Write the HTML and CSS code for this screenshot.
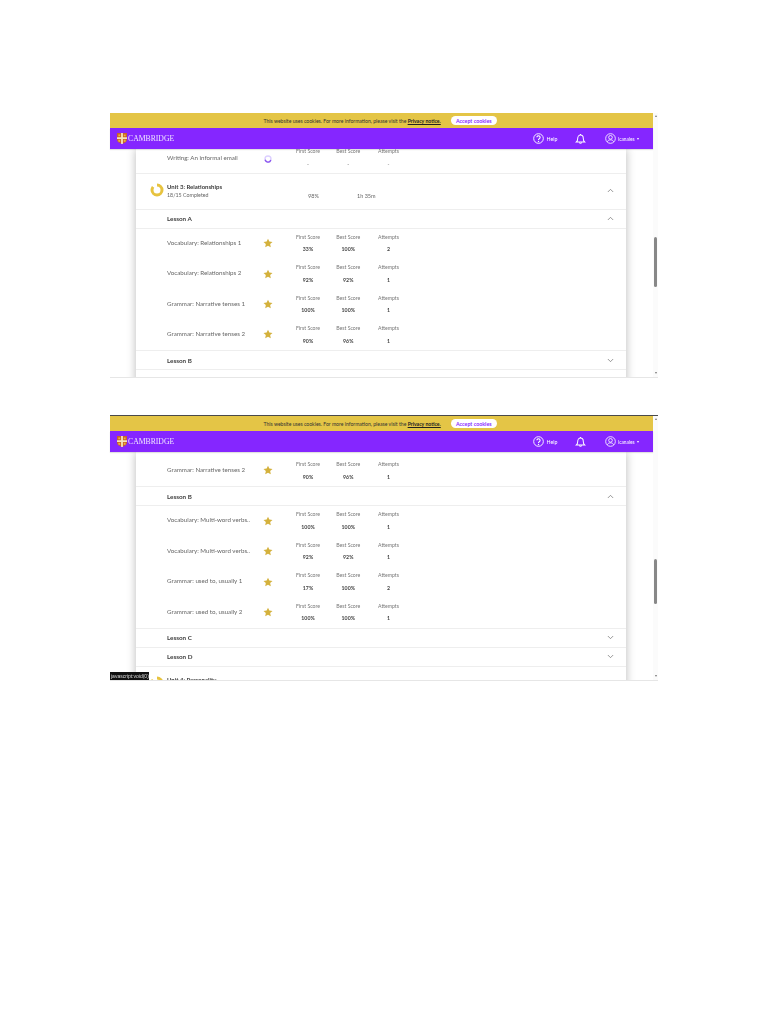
FILE: index.html
```html
<!DOCTYPE html>
<html lang="en">
<head>
<meta charset="utf-8">
<title>Cambridge course progress</title>
<link rel="stylesheet" href="styles.css">
</head>
<body>
<svg class="defs" width="0" height="0" aria-hidden="true">
  <defs>
    <symbol id="star" viewBox="0 0 24 24"><path d="M12 1.5l3.2 6.9 7.6.9-5.6 5.2 1.5 7.5L12 18.3l-6.7 3.7 1.5-7.5L1.2 9.3l7.6-.9z"/></symbol>
    <symbol id="up" viewBox="0 0 12 8"><path d="M1.5 6.5L6 2l4.500 4.500"/></symbol>
    <symbol id="down" viewBox="0 0 12 8"><path d="M1.500 1.500L6 6l4.500-4.500"/></symbol>
    <symbol id="shield" viewBox="0 0 11 12"><path fill="#c9622a" d="M0 0h11v7.500c0 2.500-3 3.800-5.500 4.500C3 11.300 0 10 0 7.500z"/><path fill="#f3e4bd" d="M4.500 0h2v12h-2zM0 4.500h11v2H0z"/><path fill="#e8b93e" d="M1.500 1.500h2v2h-2zM7.500 1.500h2v2h-2zM1.500 7.500h2v2h-2zM7.500 7.500h2v2h-2z"/></symbol>
    <symbol id="help" viewBox="0 0 24 24"><circle cx="12" cy="12" r="10.500" fill="none" stroke="#fff" stroke-width="2"/><path fill="none" stroke="#fff" stroke-width="2.400" d="M8.500 9.500a3.500 3.500 0 1 1 5.500 2.800c-1.300 1-2 1.500-2 3"/><circle cx="12" cy="18.500" r="1.500" fill="#fff"/></symbol>
    <symbol id="bell" viewBox="0 0 24 24"><path fill="none" stroke="#fff" stroke-width="2.200" d="M3 19.500c2.500-2 3-4 3-8 0-4 2.500-7 6-7s6 3 6 7c0 4 .5 6 3 8z"/><path fill="none" stroke="#fff" stroke-width="2.200" d="M9.500 20.500a2.600 2.600 0 0 0 5 0M12 4.500V2"/></symbol>
    <symbol id="user" viewBox="0 0 24 24"><circle cx="12" cy="12" r="10.500" fill="none" stroke="#fff" stroke-width="1.800"/><circle cx="12" cy="9.500" r="4" fill="none" stroke="#fff" stroke-width="1.800"/><path fill="none" stroke="#fff" stroke-width="1.800" d="M5 19c1.500-3 4-4 7-4s5.500 1 7 4"/></symbol>
  </defs>
</svg>

<section class="frame">
  <div class="app">
    <div class="cookie"><span>This website uses cookies. For more information, please visit the <a class="privacy" href="#">Privacy notice.</a></span><button class="accept">Accept cookies</button></div>
    <nav class="nav">
      <a class="brand" href="#"><svg class="shield"><use href="#shield"/></svg>CAMBRIDGE</a>
      <a class="nav-help" href="#"><svg class="nav-icon"><use href="#help"/></svg>Help</a>
      <svg class="nav-icon bell"><use href="#bell"/></svg>
      <a class="nav-user" href="#"><svg class="nav-icon"><use href="#user"/></svg>lcanales<span class="caret"></span></a>
    </nav>
    <div class="viewport">
      <div class="card">
        <div class="row row-cut">
          <span class="title">Writing: An informal email</span>
          <svg class="spinner" viewBox="0 0 12 12"><circle class="spin-bg" cx="6" cy="6" r="4.500" pathLength="100"/><circle class="spin-fg" cx="6" cy="6" r="4.500" pathLength="100"/></svg>
          <div class="score"><span>First Score</span><b class="dash">-</b></div>
          <div class="score"><span>Best Score</span><b class="dash">-</b></div>
          <div class="score"><span>Attempts</span><b class="dash">-</b></div>
        </div>
        <div class="unit">
          <svg class="ring" viewBox="0 0 14 14"><circle cx="7" cy="7" r="5" pathLength="100"/></svg>
          <div class="unit-text"><strong>Unit 3: Relationships</strong><small>18/15 Completed</small></div>
          <span class="unit-pct">98%</span>
          <span class="unit-time">1h 35m</span>
          <svg class="chev"><use href="#up"/></svg>
        </div>
        <div class="lesson"><strong>Lesson A</strong><svg class="chev"><use href="#up"/></svg></div>
        <div class="row">
          <span class="title">Vocabulary: Relationships 1</span><svg class="star"><use href="#star"/></svg>
          <div class="score"><span>First Score</span><b>33%</b></div>
          <div class="score"><span>Best Score</span><b>100%</b></div>
          <div class="score"><span>Attempts</span><b>2</b></div>
        </div>
        <div class="row">
          <span class="title">Vocabulary: Relationships 2</span><svg class="star"><use href="#star"/></svg>
          <div class="score"><span>First Score</span><b>92%</b></div>
          <div class="score"><span>Best Score</span><b>92%</b></div>
          <div class="score"><span>Attempts</span><b>1</b></div>
        </div>
        <div class="row">
          <span class="title">Grammar: Narrative tenses 1</span><svg class="star"><use href="#star"/></svg>
          <div class="score"><span>First Score</span><b>100%</b></div>
          <div class="score"><span>Best Score</span><b>100%</b></div>
          <div class="score"><span>Attempts</span><b>1</b></div>
        </div>
        <div class="row row-last">
          <span class="title">Grammar: Narrative tenses 2</span><svg class="star"><use href="#star"/></svg>
          <div class="score"><span>First Score</span><b>90%</b></div>
          <div class="score"><span>Best Score</span><b>96%</b></div>
          <div class="score"><span>Attempts</span><b>1</b></div>
        </div>
        <div class="lesson"><strong>Lesson B</strong><svg class="chev"><use href="#down"/></svg></div>
        <div class="lesson lesson-clipped"><strong>Lesson C</strong><svg class="chev"><use href="#down"/></svg></div>
      </div>
    </div>
  </div>
  <div class="scrollbar"><i class="arrow-up"></i><i class="thumb thumb-a"></i><i class="arrow-down"></i></div>
</section>

<section class="frame frame-second">
  <div class="app">
    <div class="cookie"><span>This website uses cookies. For more information, please visit the <a class="privacy" href="#">Privacy notice.</a></span><button class="accept">Accept cookies</button></div>
    <nav class="nav">
      <a class="brand" href="#"><svg class="shield"><use href="#shield"/></svg>CAMBRIDGE</a>
      <a class="nav-help" href="#"><svg class="nav-icon"><use href="#help"/></svg>Help</a>
      <svg class="nav-icon bell"><use href="#bell"/></svg>
      <a class="nav-user" href="#"><svg class="nav-icon"><use href="#user"/></svg>lcanales<span class="caret"></span></a>
    </nav>
    <div class="viewport">
      <div class="card card-second">
        <div class="row row-last">
          <span class="title">Grammar: Narrative tenses 2</span><svg class="star"><use href="#star"/></svg>
          <div class="score"><span>First Score</span><b>90%</b></div>
          <div class="score"><span>Best Score</span><b>96%</b></div>
          <div class="score"><span>Attempts</span><b>1</b></div>
        </div>
        <div class="lesson"><strong>Lesson B</strong><svg class="chev"><use href="#up"/></svg></div>
        <div class="row">
          <span class="title">Vocabulary: Multi-word verbs..</span><svg class="star"><use href="#star"/></svg>
          <div class="score"><span>First Score</span><b>100%</b></div>
          <div class="score"><span>Best Score</span><b>100%</b></div>
          <div class="score"><span>Attempts</span><b>1</b></div>
        </div>
        <div class="row">
          <span class="title">Vocabulary: Multi-word verbs..</span><svg class="star"><use href="#star"/></svg>
          <div class="score"><span>First Score</span><b>92%</b></div>
          <div class="score"><span>Best Score</span><b>92%</b></div>
          <div class="score"><span>Attempts</span><b>1</b></div>
        </div>
        <div class="row">
          <span class="title">Grammar: used to, usually 1</span><svg class="star"><use href="#star"/></svg>
          <div class="score"><span>First Score</span><b>17%</b></div>
          <div class="score"><span>Best Score</span><b>100%</b></div>
          <div class="score"><span>Attempts</span><b>2</b></div>
        </div>
        <div class="row row-last">
          <span class="title">Grammar: used to, usually 2</span><svg class="star"><use href="#star"/></svg>
          <div class="score"><span>First Score</span><b>100%</b></div>
          <div class="score"><span>Best Score</span><b>100%</b></div>
          <div class="score"><span>Attempts</span><b>1</b></div>
        </div>
        <div class="lesson"><strong>Lesson C</strong><svg class="chev"><use href="#down"/></svg></div>
        <div class="lesson"><strong>Lesson D</strong><svg class="chev"><use href="#down"/></svg></div>
        <div class="unit">
          <svg class="ring" viewBox="0 0 14 14"><circle cx="7" cy="7" r="5" pathLength="100"/></svg>
          <div class="unit-text unit-text-single"><strong>Unit 4: Personality</strong></div>
        </div>
      </div>
    </div>
  </div>
  <div class="scrollbar"><i class="arrow-up"></i><i class="thumb thumb-b"></i><i class="arrow-down"></i></div>
  <div class="tooltip">javascript:void(0)</div>
</section>
</body>
</html>
```

FILE: styles.css
```css
* { box-sizing: border-box; }
html, body { margin: 0; background: #fff; }
body {
  height: 1024px;
  padding: 113px 110px 0;
  overflow: hidden;
  font-family: "Lato", "Open Sans", sans-serif;
  color: #555;
}
.defs { position: absolute; }
a { color: inherit; text-decoration: none; }

.frame {
  position: relative;
  display: flex;
  width: 548px;
  height: 264.500px;
  border-bottom: 1px solid #e6e6e6;
  filter: blur(.35px);
}
.frame-second {
  margin-top: 38.500px;
  height: 265px;
  box-shadow: 0 -1px 0 #4a4a4a;
}
.app { flex: 1; min-width: 0; display: flex; flex-direction: column; }

.cookie {
  flex: 0 0 15px;
  display: flex;
  align-items: center;
  padding-left: 153.500px;
  gap: 10px;
  background: #e4c546;
  font-size: 5.100px;
  color: #333;
}
.privacy { font-weight: 700; color: #222; text-decoration: underline; }
.accept {
  width: 46px;
  height: 9px;
  padding: 0;
  border: 0;
  border-radius: 5px;
  background: #fff;
  color: #8a2bff;
  font: 700 5.300px "Lato", sans-serif;
}

.nav {
  position: relative;
  z-index: 2;
  flex: 0 0 21px;
  display: flex;
  align-items: center;
  padding-left: 7px;
  background: #8526ff;
  color: #fff;
  font-size: 5.300px;
  box-shadow: 0 1px 1px rgba(0,0,0,.12);
}
.brand {
  display: flex;
  align-items: center;
  gap: 1px;
  width: 416px;
  font: 7.700px "Liberation Serif", serif;
  color: #efe6ff;
}
.shield { width: 10px; height: 11px; }
.nav-icon { width: 11px; height: 11px; }
.nav-help { display: flex; align-items: center; gap: 2.500px; width: 42px; }
.bell { margin-right: 19px; }
.nav-user { display: flex; align-items: center; gap: 2px; font-size: 4.800px; }
.caret {
  width: 0; height: 0;
  border: 1.700px solid transparent;
  border-top: 2px solid #fff;
  border-bottom: 0;
}

.viewport { flex: 1; min-height: 0; overflow: hidden; padding: 0 27.500px 0 26px; }
.card {
  background: #fff;
  box-shadow: 0 0 9px rgba(0,0,0,.28);
  min-height: 300px;
  font-size: 6.300px;
}
.card-second { padding-top: 4px; }

.row {
  display: grid;
  grid-template-columns: 96px 25px 40px 40.500px 40px;
  align-items: center;
  height: 30.500px;
  padding: 0 0 1.500px 31px;
}
.row-cut {
  height: 24.500px;
  padding-bottom: 0;
  border-bottom: 1px solid #eee;
  align-items: start;
}
.row-cut .title { padding-top: 4.500px; }
.row-cut .spinner { margin-top: 6px; }
.row-cut .score { margin-top: -1px; }
.row-last { height: 31px; border-bottom: 1px solid #eee; }
.title { padding-bottom: 1.500px; color: #666; white-space: nowrap; font-size: 6.200px; }
.star { width: 10px; height: 10px; fill: #d4b13c; }
.spinner { width: 8px; height: 8px; margin-left: 1px; }
.spinner circle { fill: none; stroke-width: 2; }
.spin-bg { stroke: #dccfff; }
.spin-fg { stroke: #8a55ee; stroke-dasharray: 40 100; transform: rotate(20deg); transform-origin: center; }
.score {
  display: flex;
  flex-direction: column;
  align-items: center;
  gap: 6.500px;
  font-size: 5.200px;
  line-height: 6px;
  color: #777;
  white-space: nowrap;
}
.score b { font-weight: 700; color: #444; }
.score .dash { font-weight: 400; color: #777; }

.unit {
  position: relative;
  display: flex;
  align-items: center;
  height: 36px;
  border-bottom: 1px solid #eee;
}
.ring { width: 14px; height: 14px; margin: -2px 3px 0 14px; transform: rotate(-90deg); }
.ring circle { fill: none; stroke: #e7c33f; stroke-width: 3; stroke-dasharray: 86 100; }
.unit-text { display: flex; flex-direction: column; gap: 1.500px; width: 141px; line-height: 7px; }
.unit-text-single { padding-bottom: 8.500px; }
.unit-text strong { font-size: 6px; font-weight: 700; color: #3c3c3c; white-space: nowrap; }
.unit-text small { font-size: 5.300px; color: #666; }
.unit-pct, .unit-time { padding-top: 9px; font-size: 5.500px; color: #666; }
.unit-pct { width: 49px; }
.unit-time { flex: 1; }

.lesson {
  display: flex;
  align-items: center;
  justify-content: space-between;
  height: 19px;
  padding-left: 31px;
  border-bottom: 1px solid #eee;
}
.lesson strong { font-size: 6.300px; font-weight: 700; color: #3c3c3c; }
.chev { width: 7px; height: 5px; margin-right: 12px; fill: none; stroke: #777; stroke-width: 1.300; }
.unit .chev { position: absolute; right: 0; top: 14px; }

.scrollbar {
  position: relative;
  flex: 0 0 5px;
  display: flex;
  flex-direction: column;
  justify-content: space-between;
  align-items: center;
  padding: 2px 0 3px;
  background: #fbfbfb;
}
.thumb { position: absolute; left: .5px; width: 3.500px; border-radius: 2px; background: #888; }
.thumb-a { top: 124px; height: 50px; }
.thumb-b { top: 143px; height: 45px; }
.arrow-up, .arrow-down { width: 0; height: 0; border: 1.500px solid transparent; }
.arrow-up { border-top: 0; border-bottom: 2px solid #777; }
.arrow-down { border-bottom: 0; border-top: 2px solid #777; }

.tooltip {
  position: absolute;
  left: 0;
  bottom: 0;
  width: 39px;
  height: 8px;
  background: #111;
  color: #ddd;
  font: 5px/8px "Liberation Sans", sans-serif;
  padding-left: 1px;
  white-space: nowrap;
  overflow: hidden;
  z-index: 3;
}
```
